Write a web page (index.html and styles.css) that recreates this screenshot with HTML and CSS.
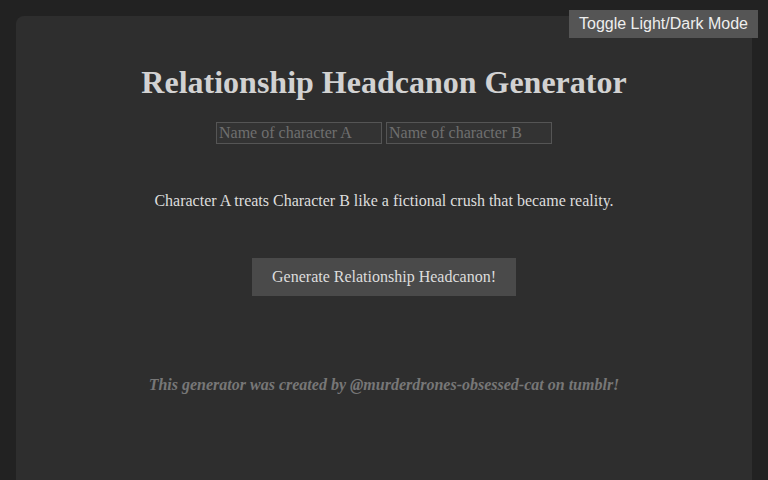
FILE: index.html
```html
<!DOCTYPE html>
<html>
<head>
<meta charset="utf-8">
<link rel="stylesheet" href="styles.css">
</head>
<body>
<button class="toggle">Toggle Light/Dark Mode</button>
<main class="card">
  <h1 class="title">Relationship Headcanon Generator</h1>
  <div class="inputs">
    <input class="name" type="text" placeholder="Name of character A">
    <input class="name" type="text" placeholder="Name of character B">
  </div>
  <p class="result">Character A treats Character B like a fictional crush that became reality.</p>
  <div class="actions">
    <button class="generate">Generate Relationship Headcanon!</button>
  </div>
  <p class="credit">This generator was created by @murderdrones-obsessed-cat on tumblr!</p>
</main>
</body>
</html>
```
FILE: styles.css
```css
html, body {
  margin: 0;
  height: 100%;
}
body {
  background: #222222;
  padding: 16px 16px 0;
  box-sizing: border-box;
  display: flex;
  flex-direction: column;
  font-family: "Liberation Serif", "Times New Roman", serif;
  color: #dddddd;
  overflow: hidden;
}
.card {
  flex: 1;
  background: #2e2e2e;
  border-radius: 8px 8px 0 0;
  padding: 48px 20px 0;
  text-align: center;
}
.title {
  margin: 0;
  font-size: 32px;
  font-weight: bold;
  line-height: 37px;
  color: #d2d2d2;
}
.inputs {
  margin-top: 21px;
  display: flex;
  justify-content: center;
  gap: 4px;
}
.name {
  box-sizing: border-box;
  width: 166px;
  height: 22px;
  margin: 0;
  padding: 0 2px;
  background: #333333;
  border: 1px solid #555555;
  color: #dddddd;
  font-family: "Liberation Serif", "Times New Roman", serif;
  font-size: 16px;
}
.name::placeholder {
  color: #6f6f6f;
}
.result {
  margin: 48px 0 0;
  font-size: 16px;
  line-height: 18px;
  color: #dddddd;
}
.actions {
  margin-top: 48px;
  display: flex;
  justify-content: center;
}
.generate {
  box-sizing: border-box;
  width: 264px;
  height: 38px;
  background: #4a4a4a;
  border: none;
  color: #dddddd;
  font-family: "Liberation Serif", "Times New Roman", serif;
  font-size: 16px;
  padding: 0;
}
.credit {
  margin: 80px 0 0;
  font-size: 16px;
  line-height: 18px;
  font-style: italic;
  font-weight: bold;
  color: #777777;
}
.toggle {
  position: fixed;
  top: 10px;
  right: 10px;
  width: 189px;
  height: 28px;
  background: #555555;
  border: none;
  color: #eeeeee;
  font-family: "Liberation Sans", Arial, sans-serif;
  font-size: 16px;
  padding: 0;
}
```
